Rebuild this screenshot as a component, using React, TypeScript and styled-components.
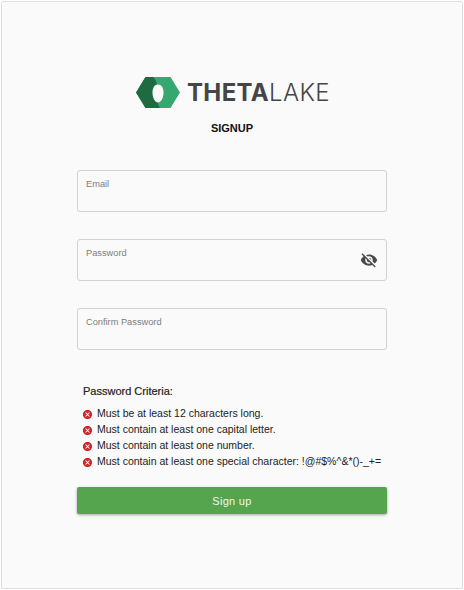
import styled, {createGlobalStyle} from "styled-components";

const GlobalStyle = createGlobalStyle`
  html, body {
    margin: 0;
    padding: 0;
    background: #ffffff;
  }
  * {
    box-sizing: border-box;
  }
`

const criteria = [
    "Must be at least 12 characters long.",
    "Must contain at least one capital letter.",
    "Must contain at least one number.",
    "Must contain at least one special character: !@#$%^&*()-_+=",
];

const Logo = () => (
    <LogoRow>
        <svg width="44" height="31" viewBox="0 0 44 31">
            <path d="M0 15.5 9.5 0H34.5L44 15.5 34.5 31H9.5Z" fill="#36a76e" />
            <path d="M0 15.5 9.5 0H17C20.5 3 22 9 22 15.5C22 22 21 28 24 31H9.5Z" fill="#1f6a41" />
            <path d="M22 7.5C25.5 7.5 27.5 11 27.5 15.5C27.5 20 25.5 25.5 22 25.5C18.5 25.5 16.5 20 16.5 15.5C16.5 11 18.5 7.5 22 7.5Z" fill="#fafafa" />
        </svg>
        <LogoText>THETA<LogoLight>LAKE</LogoLight></LogoText>
    </LogoRow>
);

const EyeOff = () => (
    <EyeIcon viewBox="0 0 24 24">
        <path d="M12 7c2.76 0 5 2.24 5 5 0 .65-.13 1.26-.36 1.83l2.92 2.92c1.51-1.26 2.7-2.89 3.43-4.75-1.73-4.39-6-7.5-11-7.5-1.4 0-2.74.25-3.98.7l2.16 2.16C10.74 7.13 11.35 7 12 7zM2 4.27l2.28 2.28.46.46C3.08 8.3 1.78 10.02 1 12c1.73 4.39 6 7.5 11 7.5 1.55 0 3.03-.3 4.38-.84l.42.42L19.73 22 21 20.73 3.27 3 2 4.27zM7.53 9.8l1.55 1.55c-.05.21-.08.43-.08.65 0 1.66 1.34 3 3 3 .22 0 .44-.03.65-.08l1.55 1.55c-.67.33-1.41.53-2.2.53-2.76 0-5-2.24-5-5 0-.79.2-1.53.53-2.2zm4.31-.78l3.15 3.15.02-.16c0-1.66-1.34-3-3-3l-.17.01z" />
    </EyeIcon>
);

const ErrorMark = () => (
    <ErrorIcon viewBox="0 0 24 24">
        <path d="M12 2C6.47 2 2 6.47 2 12s4.47 10 10 10 10-4.47 10-10S17.53 2 12 2zm5 13.59L15.59 17 12 13.41 8.41 17 7 15.59 10.59 12 7 8.41 8.41 7 12 10.59 15.59 7 17 8.41 13.41 12 17 15.59z" />
    </ErrorIcon>
);

const App = () => {
    return (
        <>
            <GlobalStyle />
            <Page>
                <Card>
                    <Logo />
                    <Title>SIGNUP</Title>
                    <Fields>
                        <Field>
                            <FieldLabel>Email</FieldLabel>
                        </Field>
                        <Field>
                            <FieldLabel>Password</FieldLabel>
                            <EyeOff />
                        </Field>
                        <Field>
                            <FieldLabel>Confirm Password</FieldLabel>
                        </Field>
                    </Fields>
                    <CriteriaTitle>Password Criteria:</CriteriaTitle>
                    <CriteriaList>
                        {criteria.map((item) => (
                            <CriteriaItem key={item}>
                                <ErrorMark />
                                {item}
                            </CriteriaItem>
                        ))}
                    </CriteriaList>
                    <SubmitButton>Sign up</SubmitButton>
                </Card>
            </Page>
        </>
    );
};

const Page = styled.div`
  width: 464px;
  height: 590px;
  padding: 1px;
  font-family: "Liberation Sans", Arial, sans-serif;
`
const Card = styled.div`
  height: 588px;
  background-color: #fafafa;
  border: 1px solid #dedede;
  border-radius: 2px;
  padding: 75px 75px 0 75px;
  display: flex;
  flex-direction: column;
`
const LogoRow = styled.div`
  display: flex;
  align-items: center;
  justify-content: center;
  gap: 7px;
  height: 31px;
  margin-left: 2px;
`
const LogoText = styled.span`
  font-family: "Inter", sans-serif;
  font-size: 24px;
  font-weight: 700;
  line-height: 31px;
  letter-spacing: 0.35px;
  color: #454545;
`
const LogoLight = styled.span`
  font-weight: 300;
`
const Title = styled.div`
  margin-top: 13px;
  text-align: center;
  font-size: 11px;
  font-weight: 700;
  line-height: 14px;
  color: #111111;
`
const Fields = styled.div`
  margin-top: 35px;
  display: flex;
  flex-direction: column;
  gap: 27px;
`
const Field = styled.div`
  position: relative;
  height: 42px;
  border: 1px solid #d2d2d2;
  border-radius: 3px;
  padding: 8px 8px 0 8px;
`
const FieldLabel = styled.div`
  font-size: 9.25px;
  line-height: 11px;
  color: #7d7d7d;
`
const EyeIcon = styled.svg`
  position: absolute;
  right: 8px;
  top: 11px;
  width: 18px;
  height: 18px;
  fill: #4a4a4a;
`
const CriteriaTitle = styled.div`
  margin-top: 34px;
  padding-left: 6px;
  font-size: 11px;
  font-weight: 400;
  -webkit-text-stroke: 0.2px #222222;
  line-height: 14px;
  color: #222222;
`
const CriteriaList = styled.div`
  margin-top: 7px;
  padding-left: 5px;
  display: flex;
  flex-direction: column;
`
const CriteriaItem = styled.div`
  display: flex;
  align-items: center;
  gap: 4px;
  height: 16px;
  font-size: 10.5px;
  white-space: nowrap;
  color: #222222;
`
const ErrorIcon = styled.svg`
  width: 11px;
  height: 11px;
  margin-top: 2px;
  fill: #c62828;
  flex-shrink: 0;
`
const SubmitButton = styled.button`
  margin-top: 18px;
  height: 27px;
  border: 0;
  border-radius: 2px;
  background-color: #55a44e;
  color: #f2f7f1;
  font-family: "Liberation Sans", Arial, sans-serif;
  font-size: 11px;
  letter-spacing: 0.3px;
  box-shadow: 0 1px 3px rgba(0, 0, 0, 0.35);
  cursor: pointer;
`

export default App;
